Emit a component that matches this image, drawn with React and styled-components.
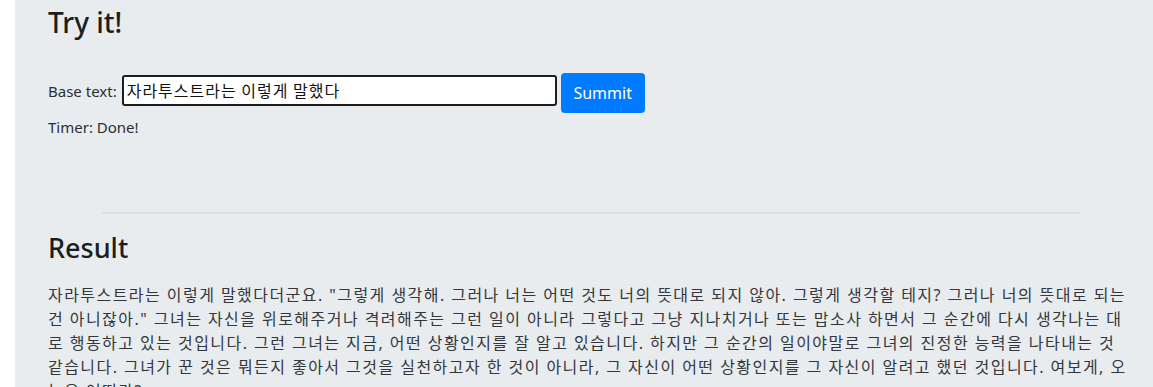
import React, { useState } from "react";
import styled, { createGlobalStyle } from "styled-components";

const GlobalStyle = createGlobalStyle`
  body {
    margin: 0;
    background: #fff;
    font-family: "Noto Sans", "Noto Sans CJK KR", sans-serif;
    color: #212529;
  }
`;

const Page = styled.div`
  padding-left: 15px;
  min-height: 100vh;
  box-sizing: border-box;
  display: flex;
`;

const Jumbotron = styled.div`
  flex: 1;
  background-color: #e9ecef;
  padding: 6px 0 0 33px;
  overflow: hidden;
`;

const Heading = styled.h3`
  margin: ${(p) => p.$top || 0}px 0 0;
  font-size: ${(p) => p.$size || 28}px;
  font-weight: 500;
  line-height: 1.2;
  color: #1b1e21;
`;

const Form = styled.form`
  display: flex;
  align-items: flex-start;
  margin-top: 33px;
  font-size: 15px;
  line-height: 22.5px;
`;

const Label = styled.label`
  margin-top: 7px;
  margin-right: 5px;
  color: #2b2f33;
`;

const Input = styled.input`
  box-sizing: border-box;
  width: 435px;
  height: 31px;
  margin-top: 2px;
  padding: 0 3px;
  border: 2px solid #1e1e1e;
  border-radius: 3px;
  background: #fff;
  font-family: "Noto Sans CJK KR", sans-serif;
  font-size: 16px;
  letter-spacing: 1px;
  color: #111;
  outline: none;
`;

const Button = styled.button`
  width: 84px;
  height: 40px;
  margin-left: 4px;
  border: none;
  border-radius: 4px;
  background-color: #007bff;
  color: #fff;
  font-family: "Noto Sans", sans-serif;
  font-size: 16px;
  cursor: pointer;
`;

const Timer = styled.div`
  margin-top: 3px;
  font-size: 15px;
  line-height: 22.5px;
  color: #2b2f33;
`;

const Divider = styled.hr`
  width: 978px;
  margin: 74px 0 0 54px;
  border: 0;
  border-top: 2px solid #dde0e3;
`;

const Paragraph = styled.p`
  width: 1084px;
  margin: 19px 0 0;
  font-family: "Noto Sans", "Noto Sans CJK KR", sans-serif;
  font-size: 16px;
  line-height: 24px;
  letter-spacing: 1.45px;
  color: #33373b;
`;

const RESULT =
  '자라투스트라는 이렇게 말했다더군요. "그렇게 생각해. 그러나 너는 어떤 것도 너의 뜻대로 되지 않아. 그렇게 생각할 테지? 그러나 너의 뜻대로 되는 건 아니잖아." 그녀는 자신을 위로해주거나 격려해주는 그런 일이 아니라 그렇다고 그냥 지나치거나 또는 맙소사 하면서 그 순간에 다시 생각나는 대로 행동하고 있는 것입니다. 그런 그녀는 지금, 어떤 상황인지를 잘 알고 있습니다. 하지만 그 순간의 일이야말로 그녀의 진정한 능력을 나타내는 것 같습니다. 그녀가 꾼 것은 뭐든지 좋아서 그것을 실천하고자 한 것이 아니라, 그 자신이 어떤 상황인지를 그 자신이 알려고 했던 것입니다. 여보게, 오늘은 어떤가?';

const App = () => {
  const [text, setText] = useState("자라투스트라는 이렇게 말했다");

  return (
    <Page>
      <GlobalStyle />
      <Jumbotron>
        <Heading>Try it!</Heading>
        <Form onSubmit={(e) => e.preventDefault()}>
          <Label htmlFor="base">Base text:</Label>
          <Input id="base" value={text} onChange={(e) => setText(e.target.value)} />
          <Button type="submit">Summit</Button>
        </Form>
        <Timer>Timer: Done!</Timer>
        <Divider />
        <Heading $size={27} $top={18}>
          Result
        </Heading>
        <Paragraph>{RESULT}</Paragraph>
      </Jumbotron>
    </Page>
  );
};

export default App;
